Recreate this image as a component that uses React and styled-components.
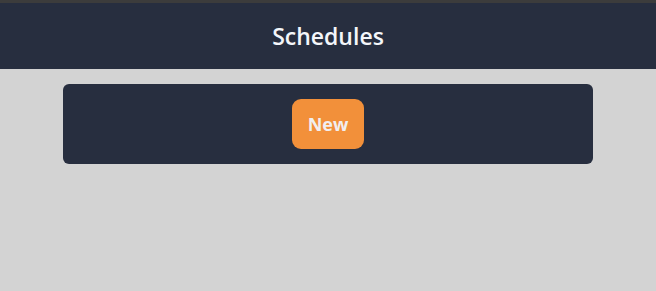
import React from "react";
import styled, { createGlobalStyle } from "styled-components";

const Global = createGlobalStyle`
  html, body { margin: 0; padding: 0; background: #d3d3d3; }
  body { font-family: "Open Sans", "Noto Sans", sans-serif; }
`;

const Page = styled.div`
  min-height: 291px;
  background: #d3d3d3;
  border-top: 3px solid #3c3c3c;
  display: flex;
  flex-direction: column;
  align-items: center;
`;

const Header = styled.header`
  align-self: stretch;
  height: 66px;
  background: #272e3f;
  display: flex;
  align-items: center;
  justify-content: center;
`;

const Title = styled.h1`
  margin: 0;
  font-size: 23px;
  font-weight: 600;
  color: #f4f6fa;
`;

const Card = styled.section`
  margin-top: 15px;
  width: 530px;
  height: 80px;
  box-sizing: border-box;
  background: #272e3f;
  border-radius: 6px;
  display: flex;
  align-items: center;
  justify-content: center;
`;

const Button = styled.button`
  width: 72px;
  height: 50px;
  border: none;
  border-radius: 9px;
  background: #f2903a;
  color: #f1eef0;
  font-family: inherit;
  font-size: 18px;
  font-weight: 700;
  cursor: pointer;
`;

export default function App() {
  return (
    <>
      <Global />
      <Page>
        <Header>
          <Title>Schedules</Title>
        </Header>
        <Card>
          <Button>New</Button>
        </Card>
      </Page>
    </>
  );
}
